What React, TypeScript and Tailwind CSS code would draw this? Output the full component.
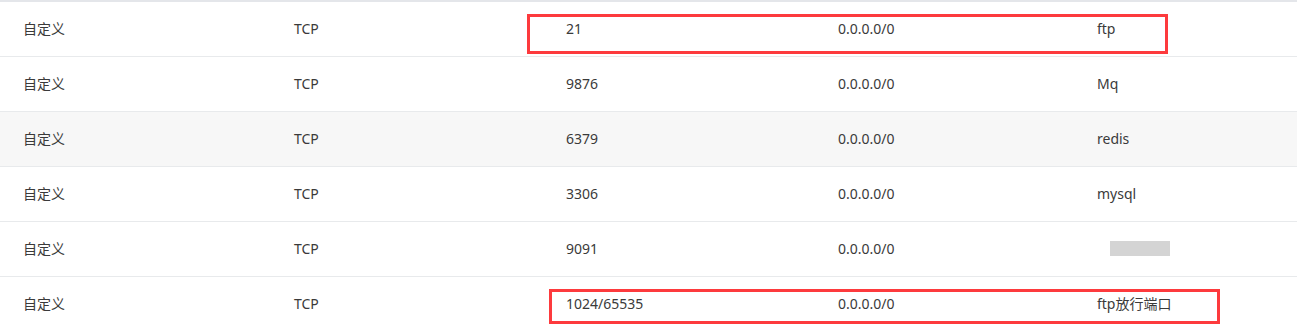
import React from "react";

const rows = [
  { port: "21", desc: "ftp" },
  { port: "9876", desc: "Mq" },
  { port: "6379", desc: "redis", hover: true },
  { port: "3306", desc: "mysql" },
  { port: "9091", desc: "", blur: true },
  { port: "1024/65535", desc: "ftp放行端口" },
];

export default function App() {
  return (
    <div
      className="relative w-[1297px] h-[331px] overflow-hidden bg-white text-[14px] text-[#3a3a3a]"
      style={{ fontFamily: '"Noto Sans", "Noto Sans CJK SC", sans-serif' }}
    >
      <div className="border-t-2 border-[#e4e6ea]">
        {rows.map((r, i) => (
          <div
            key={i}
            className={`grid grid-cols-[271px_272px_272px_259px_1fr] h-[55px] items-center pb-[2px] border-b border-[#e8eaec] ${
              r.hover ? "bg-[#f7f7f7]" : "bg-white"
            }`}
          >
            <div className="pl-[23px]">自定义</div>
            <div className="pl-[23px]">TCP</div>
            <div className="pl-[23px]">{r.port}</div>
            <div className="pl-[23px]">0.0.0.0/0</div>
            <div className="pl-[23px]">
              {r.blur ? (
                <div className="ml-[13px] w-[60px] h-[15px] bg-[#d4d4d4]" />
              ) : (
                r.desc
              )}
            </div>
          </div>
        ))}
      </div>
      <div className="absolute left-[527px] top-[14px] w-[641px] h-[40px] border-[3px] border-[#fd3a3d]" />
      <div className="absolute left-[549px] top-[289px] w-[671px] h-[35px] border-[3px] border-[#fd3a3d]" />
    </div>
  );
}
